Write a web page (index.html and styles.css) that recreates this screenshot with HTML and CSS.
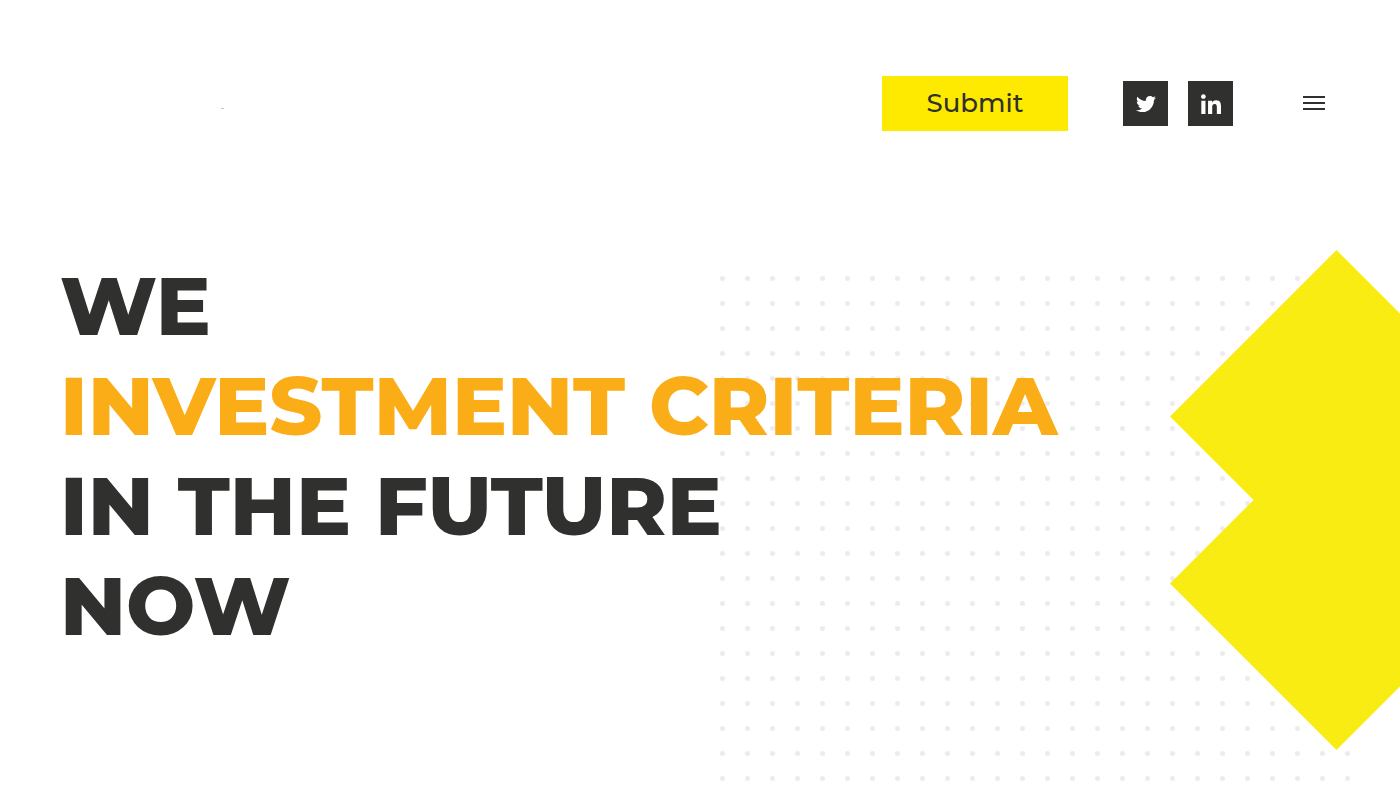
FILE: index.html
```html
<!DOCTYPE html>
<html lang="en">
<head>
<meta charset="utf-8">
<meta name="viewport" content="width=device-width, initial-scale=1">
<title>Investment criteria</title>
<link rel="stylesheet" href="styles.css">
</head>
<body>
<header class="site-header">
  <a class="brand" href="#" aria-label="Home">
    <svg class="brand-mark" viewBox="0 0 164 20" aria-hidden="true"><path d="M161 14h3v1h-3z" fill="#c4c4c4"/></svg>
  </a>
  <button class="submit" type="button">Submit</button>
  <nav class="social" aria-label="Social">
    <a class="social-link" href="#" aria-label="Twitter">
      <svg class="social-icon" viewBox="0 0 512 512" aria-hidden="true"><path d="M459.370 151.716c.325 4.548.325 9.097.325 13.645 0 138.720-105.583 298.558-298.558 298.558-59.452 0-114.680-17.219-161.137-47.106 8.447.974 16.568 1.299 25.340 1.299 49.055 0 94.213-16.568 130.274-44.832-46.132-.975-84.792-31.188-98.112-72.772 6.498.974 12.995 1.624 19.818 1.624 9.421 0 18.843-1.300 27.614-3.573-48.081-9.747-84.143-51.980-84.143-102.985v-1.299c13.969 7.797 30.214 12.670 47.431 13.319-28.264-18.843-46.781-51.005-46.781-87.391 0-19.492 5.197-37.360 14.294-52.954 51.655 63.675 129.300 105.258 216.365 109.807-1.624-7.797-2.599-15.918-2.599-24.040 0-57.828 46.782-104.934 104.934-104.934 30.213 0 57.502 12.670 76.670 33.137 23.715-4.548 46.456-13.320 66.599-25.340-7.798 24.366-24.366 44.833-46.132 57.827 21.117-2.273 41.584-8.122 60.426-16.243-14.292 20.791-32.161 39.308-52.628 54.253z"/></svg>
    </a>
    <a class="social-link" href="#" aria-label="LinkedIn">
      <svg class="social-icon" viewBox="0 0 448 448" aria-hidden="true"><path d="M100 448H7V149h93zM53.500 108C24 108 0 84 0 54a54 54 0 0 1 107 0c0 30-24 54-53.500 54zM448 448h-93V302c0-35-1-79-48-79-49 0-56 38-56 77v148h-93V149h89v41h1c13-24 43-48 88-48 94 0 112 62 112 142z"/></svg>
    </a>
  </nav>
  <button class="menu" type="button" aria-label="Menu">
    <span class="menu-line"></span><span class="menu-line"></span><span class="menu-line"></span>
  </button>
</header>
<main class="hero">
  <div class="dots" aria-hidden="true"></div>
  <svg class="diamonds" viewBox="0 0 333 500" aria-hidden="true"><path d="M166.500 0L333 166.500 249.500 250l83.500 83.500L166.500 500 0 333.500 83.500 250 0 166.500z"/></svg>
  <h1 class="headline">We <span class="accent">investment criteria</span> in the future<br>now</h1>
</main>
</body>
</html>
```
FILE: styles.css
```css
* { box-sizing: border-box; }

body {
  margin: 0;
  min-height: 100vh;
  display: flex;
  flex-direction: column;
  background: #fff;
  color: #30302e;
  font-family: Montserrat, Inter, sans-serif;
}

.site-header {
  display: flex;
  align-items: center;
  padding: 76px 75px 0 60px;
}

.brand { margin-right: auto; }

.brand-mark {
  display: block;
  width: 164px;
  height: 20px;
}

.submit {
  width: 186px;
  height: 55px;
  margin-right: 55px;
  padding: 0 0 2px;
  border: 0;
  background: #fdea00;
  color: #30302e;
  font: 500 26px/32px Montserrat, "Noto Sans", sans-serif;
}

.social {
  display: flex;
  gap: 20px;
  margin-right: 70px;
}

.social-link {
  display: flex;
  align-items: center;
  justify-content: center;
  width: 45px;
  height: 45px;
  background: #30302e;
}

.social-icon {
  width: 20px;
  height: 20px;
  fill: #fff;
}

.menu {
  display: grid;
  gap: 4px;
  width: 22px;
  padding: 0 0 1px;
  border: 0;
  background: none;
}

.menu-line {
  height: 2px;
  background: #30302e;
}

.hero {
  position: relative;
  flex: 1;
  min-height: 669px;
  padding: 125px 60px 0;
  overflow: hidden;
}

.dots {
  position: absolute;
  top: 135px;
  left: calc(50% + 10px);
  bottom: 0;
  width: 650px;
  background: radial-gradient(circle, #ececec 2px, transparent 3px) 0 0 / 25px 25px;
}

.diamonds {
  position: absolute;
  top: 119px;
  right: -103px;
  width: 333px;
  height: 500px;
  fill: #f9ec13;
}

.headline {
  position: relative;
  margin: 0;
  font-size: 82px;
  font-weight: 800;
  line-height: 100px;
  text-transform: uppercase;
}

.accent {
  display: block;
  color: #fbad18;
}
```
